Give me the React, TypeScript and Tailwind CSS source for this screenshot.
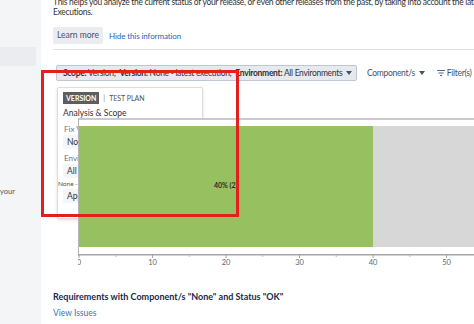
const ticks = [0, 10, 20, 30, 40, 50, 60]

function Caret() {
  return (
    <svg width="6" height="4" viewBox="0 0 6 4" className="ml-[4px] inline-block shrink-0">
      <path d="M0 0h6L3 4z" fill="#42526e" />
    </svg>
  )
}

function Chart() {
  const x0 = 1
  const unit = 7.35
  return (
    <svg width="396" height="152" viewBox="0 0 396 152" className="block">
      <rect x="0" y="0" width="396" height="152" fill="#fff" />
      <rect x="0" y="0" width="396" height="2" fill="#c9cacd" />
      <rect x="0" y="0" width="1" height="138" fill="#b5b5b5" />
      <rect x={x0} y="8" width={40 * unit} height="121" fill="#97c161" />
      <rect x={x0 + 40 * unit} y="8" width="120" height="121" fill="#d7d7d7" />
      <rect x="0" y="136" width="396" height="1.5" fill="#a6a6a6" />
      {ticks.map((t) => (
        <g key={t}>
          <rect x={x0 + t * unit - 0.5} y="137" width="1" height="3" fill="#a6a6a6" />
          <rect x={x0 + (t + 5) * unit - 0.5} y="137" width="1" height="2" fill="#bdbdbd" />
          <text
            x={x0 + t * unit}
            y="147"
            textAnchor="middle"
            fontSize="7.5"
            fill="#666"
            fontFamily="Lato, sans-serif"
          >
            {t}
          </text>
        </g>
      ))}
      <text
        x="136"
        y="70"
        fontSize="7"
        fontWeight="700"
        fill="#2b2b2b"
        fontFamily="Lato, sans-serif"
      >
        40% (2)
      </text>
    </svg>
  )
}

export default function App() {
  return (
    <div className="relative flex h-[324px] w-[474px] overflow-hidden bg-white font-['Lato',sans-serif] text-[#333]">
      {/* Sidebar */}
      <aside className="flex w-[41px] shrink-0 flex-col bg-[#f4f5f7]">
        <div className="mt-[47px] h-[19px] w-[36px] bg-[#ebecf0]" />
        <div className="mt-[121px] whitespace-nowrap text-[7.5px] leading-[10px] text-[#555]">your</div>
      </aside>

      {/* Main */}
      <main className="relative min-w-0 flex-1 pl-[12px]">
        <p className="-mt-[3px] whitespace-nowrap text-[8.5px] leading-[10px] tracking-[-0.3px] text-[#333]">
          This helps you analyze the current status of your release, or even other releases from the past, by taking into account the latest
          <br />
          Executions.
        </p>

        <div className="mt-[10px] flex items-center gap-[6px]">
          <button className="h-[17px] w-[50px] rounded-[2px] bg-[#ebecf0] text-[8.5px] text-[#42526e]">Learn more</button>
          <a className="text-[8px] tracking-[-0.1px] text-[#2a62c9]">Hide this information</a>
        </div>

        <div className="mt-[5px] h-px bg-[#dfe1e6]" />

        <div className="mt-[15px] flex items-center whitespace-nowrap text-[8.5px] tracking-[-0.3px] text-[#42526e]">
          <div className="ml-[3px] flex h-[16px] w-[301px] shrink-0 items-center rounded-[2px] border border-[#c1c7d0] bg-[#e6e9ed] pl-[6px] text-[#333]">
            <b className="font-bold">Scope:</b>&nbsp;Version;&nbsp;&nbsp;<b className="font-bold">Version:</b>&nbsp;None - latest execution;&nbsp;&nbsp;<b className="font-bold">Environment:</b>&nbsp;All Environments
            <Caret />
          </div>
          <div className="ml-[10px] flex items-center">
            Component/s
            <Caret />
          </div>
          <div className="ml-[12px] flex items-center">
            <svg width="8" height="6" viewBox="0 0 8 6" className="mr-[2px]">
              <path d="M0 .5h8M1.5 3h5M3 5.5h2" stroke="#42526e" strokeWidth="0.9" />
            </svg>
            Filter(s)
            <Caret />
          </div>
        </div>

        {/* Scope popup */}
        <div className="absolute left-[16px] top-[87px] z-0 h-[132px] w-[146px] rounded-[2px] border border-[#dcdde0] bg-white shadow-[0_1px_3px_rgba(0,0,0,0.15)]">
          <div className="ml-[5px] mt-[4px] flex items-center text-[7px]">
            <span className="bg-[#5e5e5e] px-[3px] py-[2px] font-bold leading-[8px] text-white">VERSION</span>
            <span className="mx-[4px] text-[#777]">|</span>
            <span className="text-[#555]">TEST PLAN</span>
          </div>
          <div className="ml-[5px] mt-[4px] text-[8.5px] leading-[11px] text-[#333]">Analysis &amp; Scope</div>
          <div className="ml-[6px] mt-[5px] text-[8px] leading-[10px] text-[#6b778c]">Fix Version</div>
          <div className="ml-[5px] mt-[1px] h-[14px] w-[130px] rounded-[2px] bg-[#f4f5f7] pl-[4px] text-[8.5px] leading-[14px] text-[#333]">None</div>
          <div className="ml-[6px] mt-[4px] text-[8px] leading-[10px] text-[#6b778c]">Environment</div>
          <div className="ml-[5px] mt-[1px] h-[14px] w-[130px] rounded-[2px] bg-[#f4f5f7] pl-[4px] text-[8.5px] leading-[14px] text-[#333]">All Environments</div>
          <div className="mt-[2px] text-[6.5px] leading-[8px] text-[#555]">None - latest</div>
          <div className="ml-[5px] mt-[1px] h-[14px] w-[130px] rounded-[2px] bg-[#f4f5f7] pl-[4px] text-[8.5px] leading-[14px] text-[#333]">Apply</div>
        </div>

        {/* Chart */}
        <div className="relative z-10 ml-[25px] mt-[37px]">
          <Chart />
        </div>

        <h3 className="mt-[21px] whitespace-nowrap text-[9px] font-bold leading-[12px] text-[#172b4d]">
          Requirements with Component/s "None" and Status "OK"
        </h3>
        <a className="mt-[4px] block text-[8.5px] leading-[12px] text-[#3572c9]">View Issues</a>
      </main>

      {/* Annotation */}
      <div className="pointer-events-none absolute left-[41px] top-[70px] z-20 h-[147px] w-[198px] border-[3px] border-[#e3201b]" />
    </div>
  )
}
